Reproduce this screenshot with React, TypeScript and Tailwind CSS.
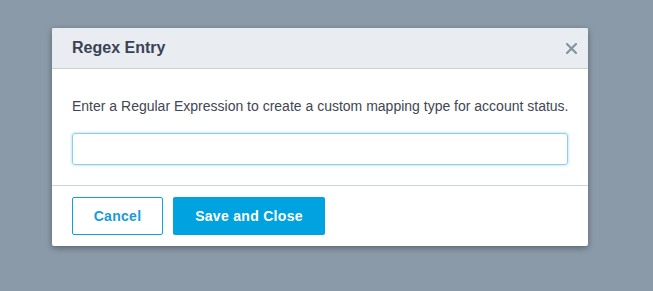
import React from 'react';

export default function App() {
  return (
    <div className="w-full h-[291px] bg-[#8a9aa8] pt-[28px] pl-[52px] font-['Liberation_Sans',Arial,sans-serif]">
      <div className="w-[536px] bg-white rounded-[2px] shadow-[0_2px_6px_rgba(0,0,0,0.35)] overflow-hidden">
        {/* Header */}
        <div className="h-[41px] bg-[#e9ecf1] border-b border-[#c8cfd8] flex items-center justify-between pl-[20px] pr-[10px]">
          <h2 className="text-[16px] font-bold text-[#3a4354]">Regex Entry</h2>
          <button className="w-[14px] h-[14px] flex items-center justify-center text-[#87939f]" aria-label="Close">
            <svg width="11" height="11" viewBox="0 0 11 11">
              <path d="M1 1 L10 10 M10 1 L1 10" stroke="currentColor" strokeWidth="2.2" strokeLinecap="square" />
            </svg>
          </button>
        </div>

        {/* Body */}
        <div className="px-[20px] pt-[27px] pb-[20px] border-b border-[#ccd3da]">
          <p className="text-[14px] leading-[20px] text-[#3f4652] whitespace-nowrap">
            Enter a Regular Expression to create a custom mapping type for account status.
          </p>
          <input
            type="text"
            className="mt-[17px] w-full h-[32px] rounded-[3px] border border-[#8fcdee] shadow-[0_0_3px_rgba(80,180,235,0.6)] outline-none px-2 text-[14px]"
          />
        </div>

        {/* Footer */}
        <div className="px-[20px] pt-[11px] pb-[11px] flex gap-[10px]">
          <button className="w-[91px] h-[38px] border border-[#0aa1de] rounded-[2px] text-[#1a9bd7] text-[14px] font-bold tracking-[0.3px]">
            Cancel
          </button>
          <button className="w-[152px] h-[38px] bg-[#00a2df] rounded-[2px] text-white text-[14px] font-bold tracking-[0.3px]">
            Save and Close
          </button>
        </div>
      </div>
    </div>
  );
}
